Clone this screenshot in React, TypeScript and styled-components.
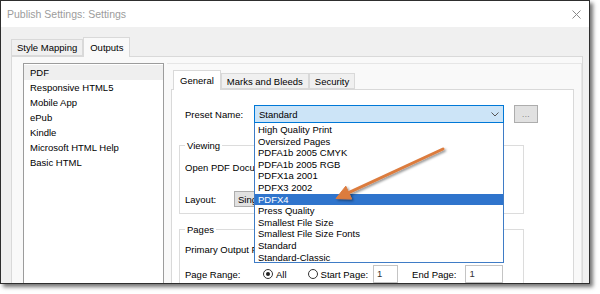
import React from "react";
import styled, { createGlobalStyle } from "styled-components";

const GlobalStyle = createGlobalStyle`
  html, body {
    margin: 0;
    padding: 0;
    background: #fff;
  }
  body {
    font-family: "Liberation Sans", Arial, sans-serif;
    font-size: 9.5px;
    color: #000;
  }
  * {
    box-sizing: border-box;
  }
`;

const Page = styled.div`
  position: relative;
  width: 600px;
  height: 294px;
  overflow: hidden;
`;

const Window = styled.div`
  width: 590px;
  height: 284px;
  border: 1px solid #2e2e2e;
  box-shadow: 3px 3px 4px rgba(0, 0, 0, 0.55);
  background: #f0f0f0;
  display: flex;
  flex-direction: column;
  overflow: hidden;
`;

const TitleBar = styled.div`
  flex: none;
  height: 26px;
  background: #fff;
  display: flex;
  align-items: center;
  justify-content: space-between;
  padding: 0 8px 0 6px;
  color: #9c9c9c;
  font-size: 10.5px;
`;

const Body = styled.div`
  flex: 1;
  overflow: hidden;
  padding: 10px 0 0 10px;
`;

const TabStrip = styled.div<{ $inset?: number }>`
  display: flex;
  align-items: flex-end;
  padding-left: ${(p) => p.$inset ?? 0}px;
  margin-bottom: -1px;
`;

const Tab = styled.div<{ $active?: boolean; $bg: string; $short: number }>`
  position: relative;
  z-index: ${(p) => (p.$active ? 1 : 0)};
  height: ${(p) => (p.$active ? 20 : p.$short)}px;
  margin-bottom: ${(p) => (p.$active ? 0 : 1)}px;
  padding: 0 ${(p) => (p.$active ? 6 : 5)}px;
  display: flex;
  align-items: center;
  border: 1px solid #d9d9d9;
  border-bottom: ${(p) => (p.$active ? "none" : "1px solid #d9d9d9")};
  background: ${(p) => (p.$active ? p.$bg : "#f0f0f0")};
  white-space: nowrap;
`;

const OuterPanel = styled.div`
  width: 572px;
  height: 280px;
  border: 1px solid #d9d9d9;
  background: #f9f9f9;
  padding: 6px 0 0 11px;
  display: flex;
  gap: 3px;
`;

const ListBox = styled.div`
  flex: none;
  width: 141px;
  height: 270px;
  border: 1px solid #9c9c9c;
  background: #fff;
  padding-top: 1px;
`;

const ListItem = styled.div<{ $selected?: boolean }>`
  height: 15px;
  line-height: 15px;
  padding-left: 6px;
  background: ${(p) => (p.$selected ? "#efefef" : "transparent")};
  white-space: nowrap;
`;

const RightPane = styled.div`
  flex: 1;
  display: flex;
  flex-direction: column;
  border-top: 1px solid #e6e6e6;
  border-right: 1px solid #e6e6e6;
  padding: 6px 7px 0 4px;
`;

const InnerPanel = styled.div`
  flex: 1;
  background: #fff;
  border: 1px solid #d9d9d9;
  padding: 15px 0 0 7px;
`;

const Row = styled.div<{ $height: number; $top?: number }>`
  display: flex;
  align-items: center;
  height: ${(p) => p.$height}px;
  margin-top: ${(p) => p.$top ?? 0}px;
  white-space: nowrap;
`;

const PresetRow = styled(Row)`
  padding-left: 6px;
`;

const Label = styled.span<{ $width?: number }>`
  flex: none;
  width: ${(p) => (p.$width ? `${p.$width}px` : "auto")};
  overflow: hidden;
`;

const ComboWrap = styled.div`
  position: relative;
  z-index: 5;
`;

const PresetCombo = styled.div`
  width: 250px;
  height: 18px;
  background: #cce4f7;
  border: 1px solid #0078d7;
  display: flex;
  align-items: center;
  justify-content: space-between;
  padding: 0 4px 0 4px;
`;

const Dropdown = styled.div`
  position: absolute;
  top: 100%;
  left: 0;
  width: 250px;
  height: 140px;
  background: #fff;
  border: 1px solid #3f7cc6;
  border-top: none;
  padding-top: 1px;
`;

const DropItem = styled.div<{ $selected?: boolean }>`
  height: 11.6px;
  line-height: 11.6px;
  padding-left: 3px;
  background: ${(p) => (p.$selected ? "#2f74cc" : "transparent")};
  color: ${(p) => (p.$selected ? "#fff" : "#000")};
`;

const DotsButton = styled.div`
  margin-left: 10px;
  width: 24px;
  height: 18px;
  background: #e1e1e1;
  border: 1px solid #adadad;
  color: #666;
  font-size: 8px;
  display: flex;
  align-items: center;
  justify-content: center;
  letter-spacing: 0.5px;
`;

const Group = styled.fieldset<{ $top: number }>`
  width: 345px;
  margin: ${(p) => p.$top}px 0 0 0;
  border: 1px solid #dcdcdc;
  padding: 0 0 6px 5px;
`;

const Legend = styled.legend`
  padding: 0 2px;
  line-height: 11px;
`;

const GrayCombo = styled.div<{ $width: number }>`
  width: ${(p) => p.$width}px;
  height: 16px;
  background: #e1e1e1;
  border: 1px solid #adadad;
  border-right: none;
  display: flex;
  align-items: center;
  padding-left: 3px;
  overflow: hidden;
  white-space: nowrap;
`;

const Radio = styled.span<{ $checked?: boolean; $gap: number }>`
  flex: none;
  width: 10px;
  height: 10px;
  margin-left: ${(p) => p.$gap}px;
  margin-right: 3px;
  border: 1px solid #333;
  border-radius: 50%;
  display: flex;
  align-items: center;
  justify-content: center;
  &::after {
    content: "";
    width: 4px;
    height: 4px;
    border-radius: 50%;
    background: ${(p) => (p.$checked ? "#222" : "transparent")};
  }
`;

const NumberBox = styled.div<{ $width: number; $gap: number }>`
  flex: none;
  width: ${(p) => p.$width}px;
  height: 18px;
  margin-left: ${(p) => p.$gap}px;
  border: 1px solid #c4c4c4;
  background: #fff;
  padding: 2px 0 0 3px;
  color: #333;
`;

const Spaced = styled.span<{ $gap: number }>`
  margin-left: ${(p) => p.$gap}px;
`;

const ArrowLayer = styled.svg`
  position: absolute;
  left: 0;
  top: 0;
  pointer-events: none;
  z-index: 10;
`;

const presets = [
  "High Quality Print",
  "Oversized Pages",
  "PDFA1b 2005 CMYK",
  "PDFA1b 2005 RGB",
  "PDFX1a 2001",
  "PDFX3 2002",
  "PDFX4",
  "Press Quality",
  "Smallest File Size",
  "Smallest File Size Fonts",
  "Standard",
  "Standard-Classic",
];

const outputs = [
  "PDF",
  "Responsive HTML5",
  "Mobile App",
  "ePub",
  "Kindle",
  "Microsoft HTML Help",
  "Basic HTML",
];

function CloseIcon() {
  return (
    <svg width="9" height="9" viewBox="0 0 9 9">
      <path d="M0.5 0.5 L8.5 8.5 M8.5 0.5 L0.5 8.5" stroke="#8a8a8a" strokeWidth="1" />
    </svg>
  );
}

function Chevron() {
  return (
    <svg width="8" height="5" viewBox="0 0 8 5">
      <path d="M0.5 0.5 L4 4 L7.5 0.5" fill="none" stroke="#555" strokeWidth="1" />
    </svg>
  );
}

function Arrow() {
  return (
    <ArrowLayer width="600" height="294" viewBox="0 0 600 294">
      <defs>
        <filter id="shadow" x="-20%" y="-20%" width="140%" height="140%">
          <feDropShadow dx="1.5" dy="1.5" stdDeviation="1" floodColor="#000" floodOpacity="0.45" />
        </filter>
      </defs>
      <g filter="url(#shadow)" fill="#dc7b3e" stroke="#dc7b3e">
        <line x1="443" y1="149" x2="348.7" y2="192.6" strokeWidth="3" strokeLinecap="round" />
        <polygon points="336,198.5 351.6,199 345.8,186.2" strokeWidth="1" strokeLinejoin="round" />
      </g>
    </ArrowLayer>
  );
}

export default function App() {
  return (
    <Page>
      <GlobalStyle />
      <Window>
        <TitleBar>
          <span>Publish Settings: Settings</span>
          <CloseIcon />
        </TitleBar>
        <Body>
          <TabStrip>
            <Tab $bg="#f9f9f9" $short={17}>Style Mapping</Tab>
            <Tab $active $bg="#f9f9f9" $short={17}>Outputs</Tab>
          </TabStrip>
          <OuterPanel>
            <ListBox>
              {outputs.map((o, i) => (
                <ListItem key={o} $selected={i === 0}>
                  {o}
                </ListItem>
              ))}
            </ListBox>
            <RightPane>
              <TabStrip $inset={2}>
                <Tab $active $bg="#fff" $short={16}>General</Tab>
                <Tab $bg="#fff" $short={16}>Marks and Bleeds</Tab>
                <Tab $bg="#fff" $short={16}>Security</Tab>
              </TabStrip>
              <InnerPanel>
                <PresetRow $height={18}>
                  <Label $width={69}>Preset Name:</Label>
                  <ComboWrap>
                    <PresetCombo>
                      <span>Standard</span>
                      <Chevron />
                    </PresetCombo>
                    <Dropdown>
                      {presets.map((p) => (
                        <DropItem key={p} $selected={p === "PDFX4"}>
                          {p}
                        </DropItem>
                      ))}
                    </Dropdown>
                  </ComboWrap>
                  <DotsButton>...</DotsButton>
                </PresetRow>

                <Group $top={17}>
                  <Legend>Viewing</Legend>
                  <Row $height={18} $top={7}>
                    <Label $width={69}>Open PDF Document:</Label>
                  </Row>
                  <Row $height={16} $top={15}>
                    <Label $width={49}>Layout:</Label>
                    <GrayCombo $width={20}>Single Page</GrayCombo>
                  </Row>
                </Group>

                <Group $top={10}>
                  <Legend>Pages</Legend>
                  <Row $height={18} $top={5}>
                    <Label $width={69}>Primary Output Project:</Label>
                  </Row>
                  <Row $height={18} $top={7}>
                    <Label $width={78}>Page Range:</Label>
                    <Radio $checked $gap={0} />
                    <span>All</span>
                    <Radio $gap={21} />
                    <span>Start Page:</span>
                    <NumberBox $width={25} $gap={5}>1</NumberBox>
                    <Spaced $gap={14}>End Page:</Spaced>
                    <NumberBox $width={38} $gap={9}>1</NumberBox>
                  </Row>
                </Group>
              </InnerPanel>
            </RightPane>
          </OuterPanel>
        </Body>
      </Window>
      <Arrow />
    </Page>
  );
}
